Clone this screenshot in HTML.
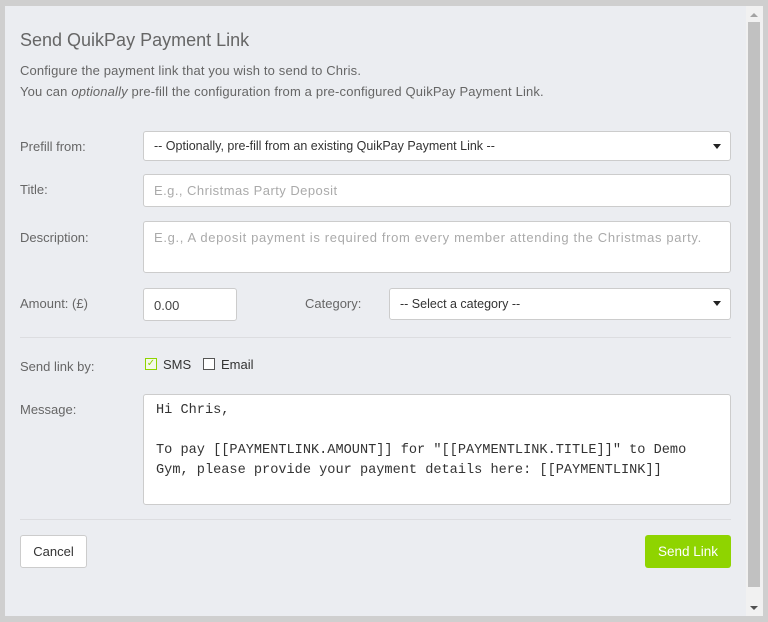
<!DOCTYPE html>
<html><head><style>
*{box-sizing:border-box;margin:0;padding:0}
body{width:768px;height:622px;background:#cfcfcf;font-family:"Liberation Sans",sans-serif;position:relative;overflow:hidden}
.panel{position:absolute;left:5px;top:6px;width:741px;height:610px;background:#ebedf1}
.sb{position:absolute;left:746px;top:6px;width:17px;height:610px;background:#f1f1f1}
.thumb{position:absolute;left:2px;top:16px;width:12px;height:565px;background:#c1c1c1}
.up,.dn{position:absolute;left:4px;width:0;height:0;border-left:4px solid transparent;border-right:4px solid transparent}
.up{top:7px;border-bottom:4px solid #a3a3a3}
.dn{bottom:6px;border-top:4px solid #505050}
.t{position:absolute;color:#666;font-size:13px}
h1{position:absolute;left:20px;top:30px;font-size:18px;font-weight:normal;color:#666}
.box{position:absolute;background:#fff;border:1px solid #ccc;border-radius:3px;font-size:13px;color:#333;padding-left:10px}
.sel{font-size:12.5px}
.ph{color:#aaa;letter-spacing:0.45px}
.arrow{position:absolute;right:9px;top:12px;border-left:4px solid transparent;border-right:4px solid transparent;border-top:5px solid #222}
.hr{position:absolute;left:20px;width:711px;height:1px;background:#dcdde0}
.mono{font-family:"Liberation Mono",monospace;font-size:13.6px;color:#333;line-height:20px;white-space:nowrap}
</style></head><body>
<div class="panel"></div>
<div class="sb"><div class="up"></div><div class="thumb"></div><div class="dn"></div></div>
<h1>Send QuikPay Payment Link</h1>
<div class="t" style="left:20px;top:63px;letter-spacing:0.15px">Configure the payment link that you wish to send to Chris.</div>
<div class="t" style="left:20px;top:84px;letter-spacing:0.15px">You can <i>optionally</i> pre-fill the configuration from a pre-configured QuikPay Payment Link.</div>
<div class="t" style="left:20px;top:139px">Prefill from:</div>
<div class="box sel" style="left:143px;top:131px;width:588px;height:30px;line-height:28px">-- Optionally, pre-fill from an existing QuikPay Payment Link --<div class="arrow"></div></div>
<div class="t" style="left:20px;top:182px">Title:</div>
<div class="box ph" style="left:143px;top:174px;width:588px;height:33px;line-height:31px">E.g., Christmas Party Deposit</div>
<div class="t" style="left:20px;top:230px">Description:</div>
<div class="box ph" style="left:143px;top:221px;width:588px;height:52px;padding-top:8px;letter-spacing:0.65px">E.g., A deposit payment is required from every member attending the Christmas party.</div>
<div class="t" style="left:20px;top:296px">Amount: (£)</div>
<div class="box" style="left:143px;top:288px;width:94px;height:33px;line-height:33px;color:#444">0.00</div>
<div class="t" style="left:305px;top:296px">Category:</div>
<div class="box sel" style="left:389px;top:288px;width:342px;height:32px;line-height:30px">-- Select a category --<div class="arrow"></div></div>
<div class="hr" style="top:337px"></div>
<div class="t" style="left:20px;top:359px">Send link by:</div>
<div style="position:absolute;left:145px;top:358px;width:12px;height:12px;border:1px solid #8fd400;background:#f4f9ea;font-size:10px;color:#8fd400;line-height:10px;text-align:center">✓</div>
<div style="position:absolute;left:163px;top:357px;font-size:13px;color:#333">SMS</div>
<div style="position:absolute;left:203px;top:358px;width:12px;height:12px;border:1px solid #555;background:#fff"></div>
<div style="position:absolute;left:221px;top:357px;font-size:13px;color:#333">Email</div>
<div class="t" style="left:20px;top:402px">Message:</div>
<div class="box mono" style="left:143px;top:394px;width:588px;height:111px;padding:6px 12px">Hi Chris,<br><br>To pay [[PAYMENTLINK.AMOUNT]] for "[[PAYMENTLINK.TITLE]]" to Demo<br>Gym, please provide your payment details here: [[PAYMENTLINK]]</div>
<div class="hr" style="top:519px"></div>
<div class="box" style="left:20px;top:535px;width:67px;height:33px;line-height:31px;padding:0;text-align:center;color:#333;font-size:13px">Cancel</div>
<div style="position:absolute;left:645px;top:535px;width:86px;height:33px;background:#8fd400;border-radius:3px;color:#fff;font-size:13.5px;line-height:33px;text-align:center">Send Link</div>
</body></html>
